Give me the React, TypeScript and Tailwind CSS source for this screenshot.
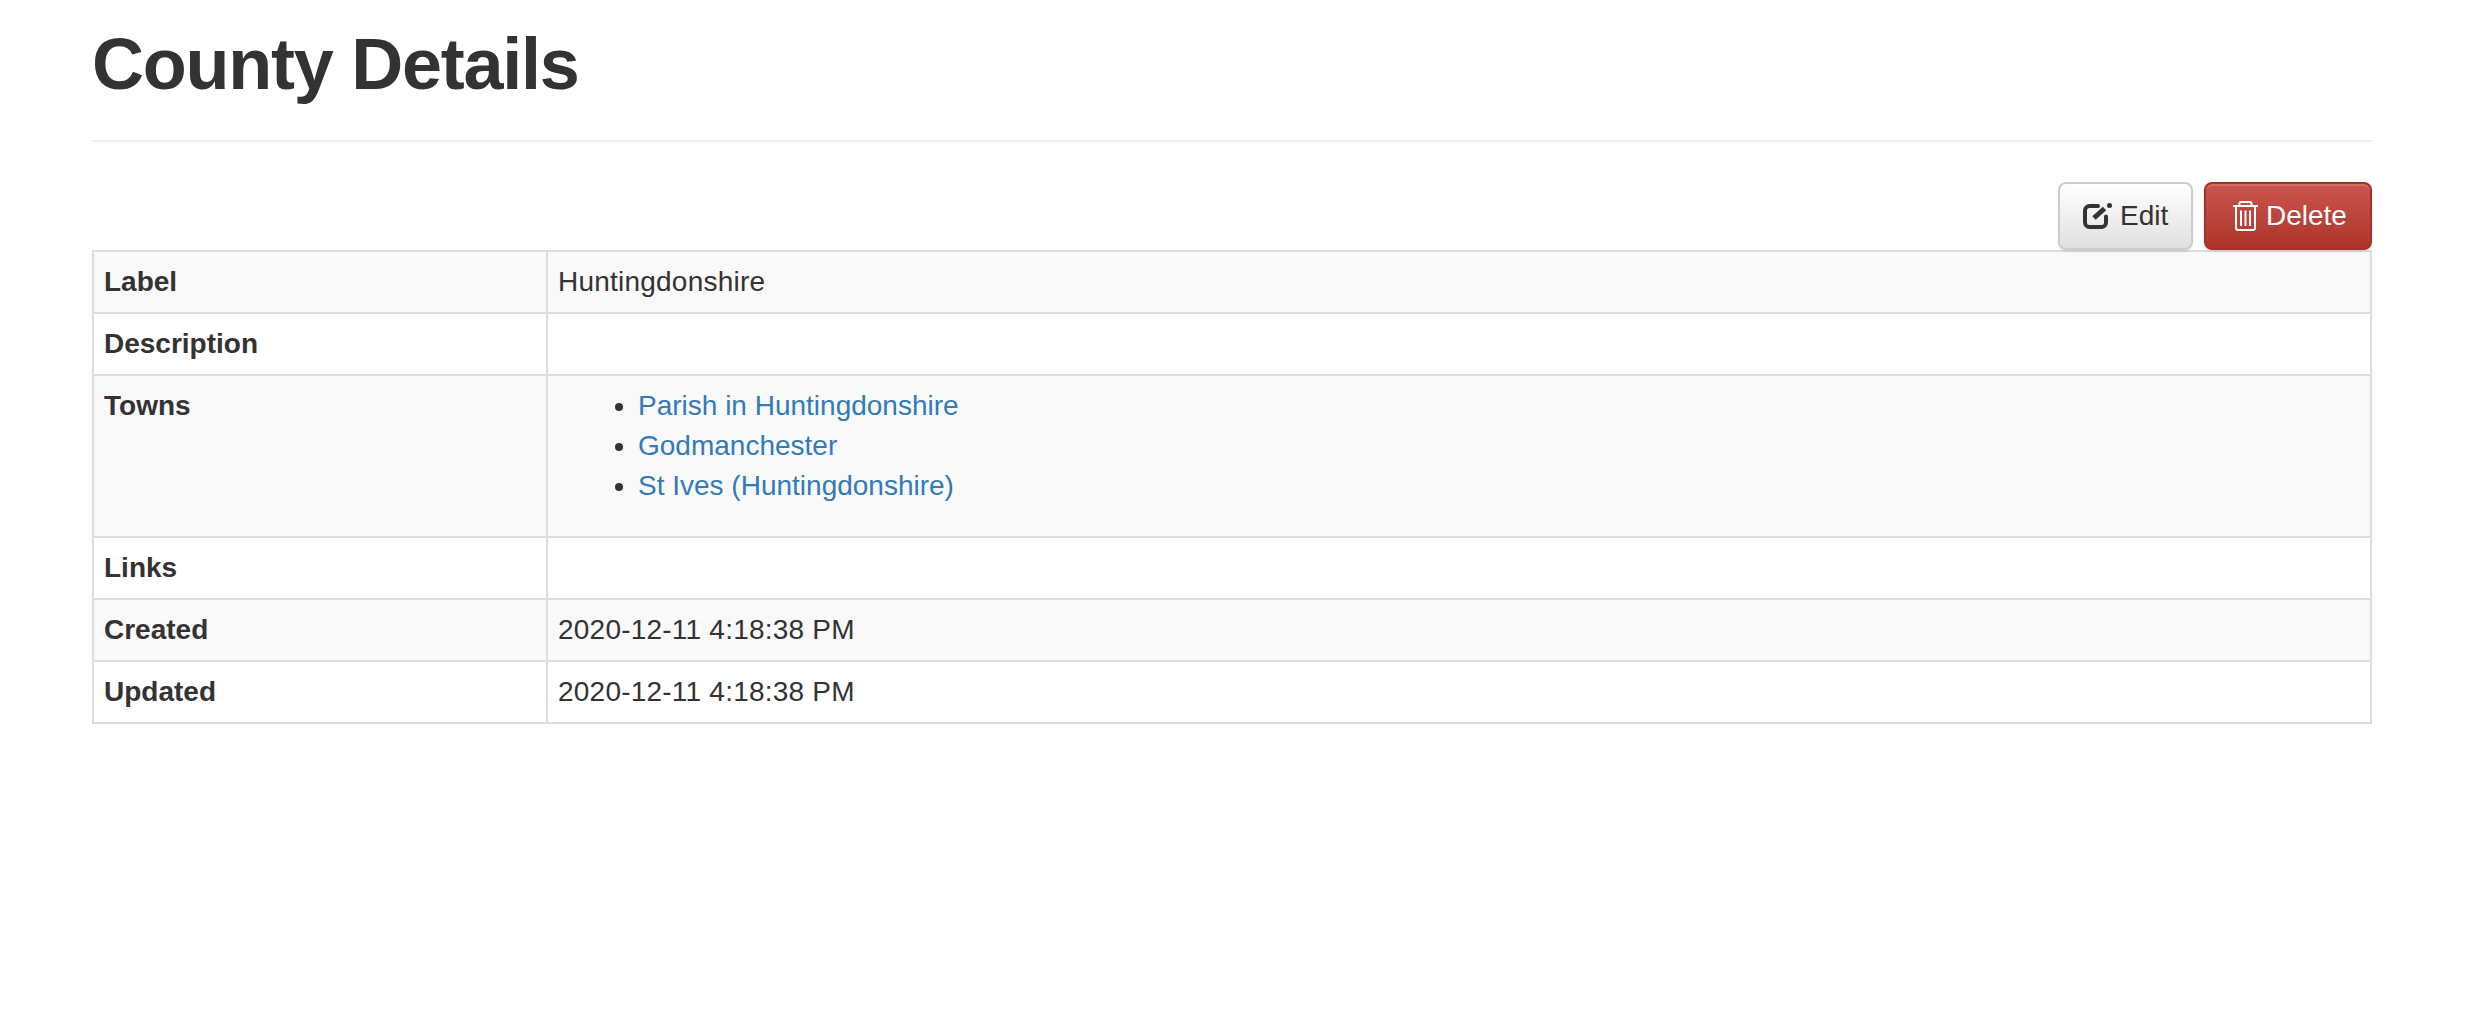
const rows = [
  { label: "Label", value: "Huntingdonshire" },
  { label: "Description", value: "" },
  { label: "Towns", towns: ["Parish in Huntingdonshire", "Godmanchester", "St Ives (Huntingdonshire)"] },
  { label: "Links", value: "" },
  { label: "Created", value: "2020-12-11 4:18:38 PM" },
  { label: "Updated", value: "2020-12-11 4:18:38 PM" },
];

function EditIcon() {
  return (
    <svg width="30" height="26" viewBox="0 0 30 26" fill="none" stroke="currentColor" strokeLinecap="round">
      {/* rounded box, open at the top right */}
      <path d="M15 3H6.500A4.500 4.500 0 0 0 2 7.500V19.500A4.500 4.500 0 0 0 6.500 24H18.500A4.500 4.500 0 0 0 23 19.500V13.500" strokeWidth="4" />
      {/* pencil */}
      <path d="M11 15L21.500 5.500" strokeWidth="5" strokeLinecap="butt" />
      <circle cx="26.500" cy="2.500" r="2.500" fill="currentColor" stroke="none" />
    </svg>
  );
}

function TrashIcon() {
  return (
    <svg width="25" height="30" viewBox="0 0 25 30" fill="none" stroke="currentColor" strokeWidth="2">
      <path d="M0 5H25" />
      <path d="M6.500 5V2.500Q6.500 1 8 1H17Q18.500 1 18.500 2.500V5" />
      <path d="M3 5V27Q3 29 5 29H20Q22 29 22 27V5" />
      <path d="M8 9.500V25M12.500 9.500V25M17 9.500V25" />
    </svg>
  );
}

export default function App() {
  return (
    <div className="min-h-[1028px] bg-white pl-[92px] pr-[120px] font-['Liberation_Sans',Arial,sans-serif] text-[28px] leading-[40px] text-[#333333]">
      {/* Header */}
      <h1 className="pt-[25px] text-[72px] font-bold leading-[79px] tracking-[-1.25px]">County Details</h1>
      <hr className="mt-[36px] border-t-2 border-[#eeeeee]" />

      {/* Actions */}
      <div className="mt-[40px] flex justify-end gap-[11px]">
        <button className="flex h-[68px] w-[135px] items-center gap-[7px] rounded-[8px] border-2 border-[#cccccc] bg-gradient-to-b from-white to-[#e0e0e0] pl-[23px] shadow-[inset_0_2px_0_rgba(255,255,255,0.15),0_2px_2px_rgba(0,0,0,0.075)]">
          <EditIcon />
          Edit
        </button>
        <button className="flex h-[68px] w-[168px] items-center gap-[8px] rounded-[8px] border-2 border-[#a82e28] bg-gradient-to-b from-[#c9564f] to-[#ad3329] pl-[27px] text-white shadow-[inset_0_2px_0_rgba(255,255,255,0.15),0_2px_2px_rgba(0,0,0,0.075)]">
          <TrashIcon />
          Delete
        </button>
      </div>

      {/* Details table */}
      <table className="w-full table-fixed border-collapse border-2 border-[#dddddd]">
        <tbody>
          {rows.map((row, i) => (
            <tr key={row.label} className={i % 2 === 0 ? "bg-[#f9f9f9]" : "bg-white"}>
              <th className="w-[454px] border-2 border-[#dddddd] p-[10px] text-left align-top font-bold">{row.label}</th>
              <td className="h-[62px] border-2 border-[#dddddd] p-[10px] align-top">
                {row.towns ? (
                  <ul className="mb-[20px] list-disc pl-[80px]">
                    {row.towns.map((t) => (
                      <li key={t}>
                        <a href="#" className="text-[#337ab7]">{t}</a>
                      </li>
                    ))}
                  </ul>
                ) : (
                  <span className="tracking-[0.22px]">{row.value}</span>
                )}
              </td>
            </tr>
          ))}
        </tbody>
      </table>
    </div>
  );
}
